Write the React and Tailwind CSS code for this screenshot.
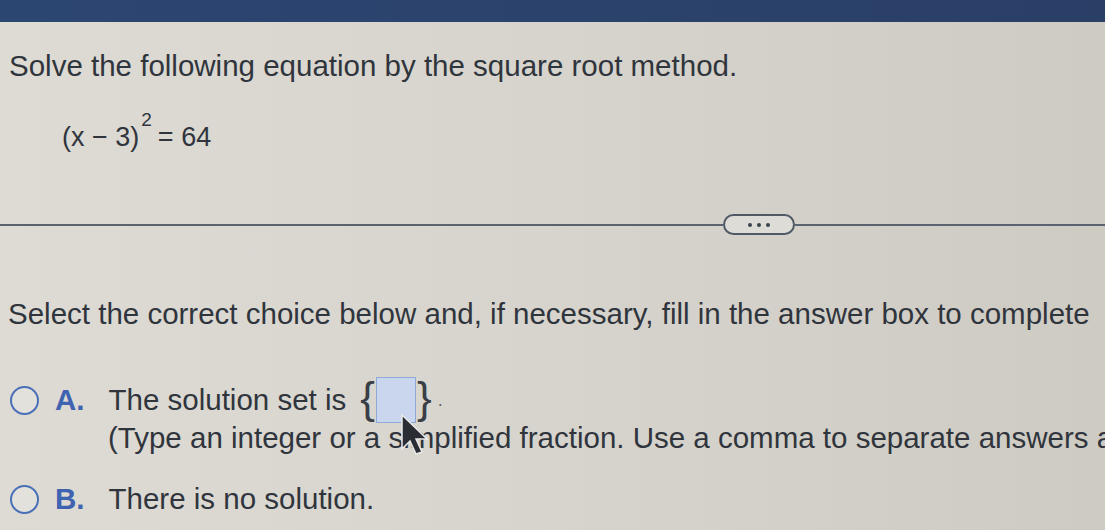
import React from "react";

function Radio() {
    return (
        <span className="inline-block w-[29px] h-[29px] rounded-full border-2 border-[#4a70b8] bg-[#e2e1dc] shrink-0" />
    );
}

export default function App() {
    return (
        <div
            className="w-[1105px] h-[530px] overflow-hidden flex flex-col text-[#30353d] bg-gradient-to-r from-[#dddbd4] via-[#d6d4cd] to-[#cecbc3]"
            style={{ fontFamily: '"Liberation Sans", Arial, sans-serif' }}
        >
            <div className="h-[22px] bg-gradient-to-r from-[#2c4672] to-[#2a3f66] shrink-0" />

            <h1 className="mt-[26px] pl-[9px] text-[29.5px] leading-[36px] whitespace-nowrap">
                Solve the following equation by the square root method.
            </h1>

            <div className="mt-[38px] pl-[62px] text-[27px] leading-[30px] whitespace-nowrap flex items-start">
                <span>(x − 3)</span>
                <span className="text-[19px] leading-[19px] -mt-[12px] ml-[2px]">2</span>
                <span className="ml-[6px]">= 64</span>
            </div>

            <div className="mt-[62px] flex items-center">
                <div className="flex-1 h-[2px] bg-[#5a6470]" />
                <button className="w-[72px] h-[21px] rounded-full border-2 border-[#4f5a66] bg-[#dedcd6] flex items-center justify-center gap-[5px]">
                    <span className="w-[4px] h-[4px] rounded-full bg-[#3a4450]" />
                    <span className="w-[4px] h-[4px] rounded-full bg-[#3a4450]" />
                    <span className="w-[4px] h-[4px] rounded-full bg-[#3a4450]" />
                </button>
                <div className="w-[310px] h-[2px] bg-[#5a6470]" />
            </div>

            <p className="mt-[61px] pl-[8px] text-[29.5px] leading-[36px] whitespace-nowrap">
                Select the correct choice below and, if necessary, fill in the answer box to complete
            </p>

            <div className="mt-[44px] pl-[10px] flex items-center whitespace-nowrap text-[29.5px] leading-[48px]">
                <Radio />
                <span className="ml-[16px] font-bold text-[#3f63b0]">A.</span>
                <span className="ml-[24px]">The solution set is</span>
                <span className="ml-[14px] flex items-center text-[44px] leading-[48px] font-light text-[#3a3f47]">
                    <span className="-mt-[4px]">{"{"}</span>
                    <span className="mx-[1px] w-[40px] h-[46px] border border-[#8fa9d6] bg-[#c9d6ee]" />
                    <span className="-mt-[4px]">{"}"}</span>
                </span>
                <span className="ml-[6px] text-[18px] text-[#666]">.</span>
            </div>

            <div className="relative mt-[-4px] pl-[108px] text-[29.5px] leading-[36px] whitespace-nowrap">
                (Type an integer or a simplified fraction. Use a comma to separate answers as needed.)
                <svg
                    className="absolute left-[399px] top-[-8px]"
                    width="32"
                    height="44"
                    viewBox="0 0 32 44"
                >
                    <path d="M3 3 L3 37 L11 29 L17 42 L23 40 L17 27 L28 27 Z" fill="#2a2d33" stroke="#e8e8e8" strokeWidth="1.5" />
                </svg>
            </div>

            <div className="mt-[25px] pl-[10px] flex items-center whitespace-nowrap text-[29.5px] leading-[36px]">
                <Radio />
                <span className="ml-[16px] font-bold text-[#3f63b0]">B.</span>
                <span className="ml-[24px]">There is no solution.</span>
            </div>
        </div>
    );
}
